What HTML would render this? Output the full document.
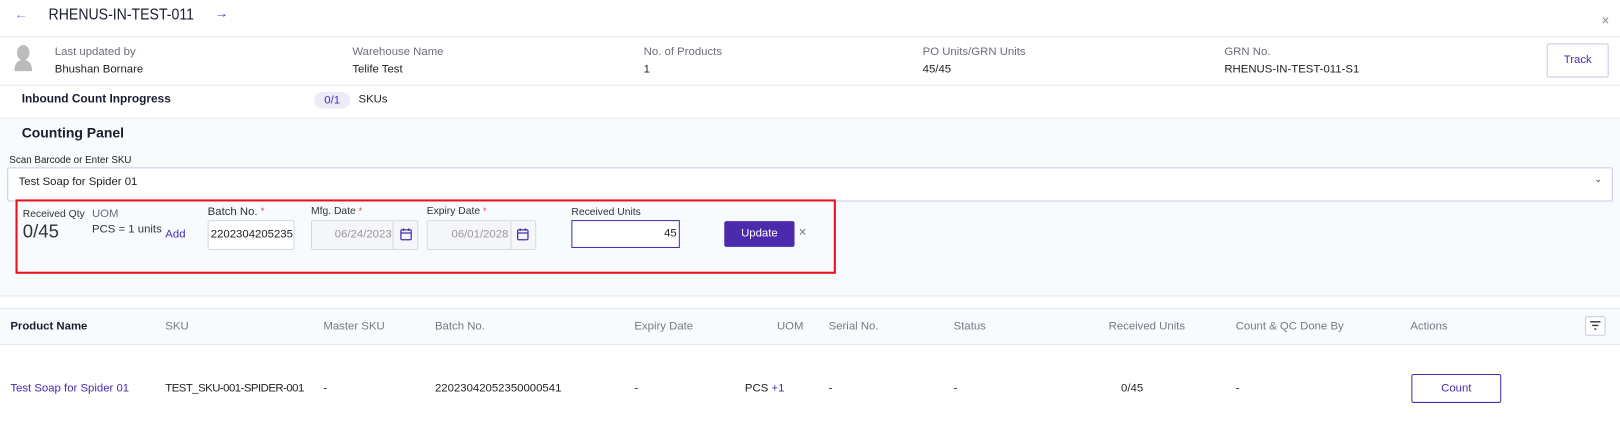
<!DOCTYPE html>
<html><head><style>
*{box-sizing:border-box;margin:0;padding:0}
body{width:1620px;height:428px;position:relative;background:#fff;font-family:"Liberation Sans",sans-serif;color:#222;font-size:11px;overflow:hidden}
#w{position:absolute;left:0;top:0;width:1568px;height:415px;transform:scale(1.0332);transform-origin:0 0}
.a{position:absolute;white-space:nowrap}
.lbl{color:#6b6f7a;font-size:11px}
.val{color:#222;font-size:11px}
.hl{position:absolute;left:0;width:1568px;height:1px;background:#e6e8ee}
.th{position:absolute;top:310px;color:#757a85;font-size:11px}
.td{position:absolute;top:370px;font-size:11px;color:#222}
.inp{position:absolute;background:#fff;border:1px solid #d6d9e0;border-radius:2px}
.star{color:#e04040;font-size:9px;vertical-align:top}
</style></head><body><div id="w">
<div class="a" style="left:14px;top:6px;color:#8a7fc8;font-size:13px">←</div>
<div class="a" style="left:47px;top:6px;font-size:15.5px;color:#1a1d2e;transform:scaleX(0.88);transform-origin:0 0">RHENUS-IN-TEST-011</div>
<div class="a" style="left:208px;top:5px;color:#4b2aad;font-size:13px">→</div>
<div class="a" style="left:1550px;top:12px;color:#888;font-size:13px">×</div>
<div class="hl" style="top:35px"></div>
<svg class="a" style="left:14px;top:43px" width="17" height="26" viewBox="0 0 17 26"><ellipse cx="8.5" cy="8" rx="6" ry="7.5" fill="#bbb"/><path d="M0 26 Q0 15 8.5 15 Q17 15 17 26Z" fill="#bbb"/></svg>
<div class="a lbl" style="left:53px;top:44px">Last updated by</div><div class="a val" style="left:53px;top:61px">Bhushan Bornare</div>
<div class="a lbl" style="left:341px;top:44px">Warehouse Name</div><div class="a val" style="left:341px;top:61px">Telife Test</div>
<div class="a lbl" style="left:623px;top:44px">No. of Products</div><div class="a val" style="left:623px;top:61px">1</div>
<div class="a lbl" style="left:893px;top:44px">PO Units/GRN Units</div><div class="a val" style="left:893px;top:61px">45/45</div>
<div class="a lbl" style="left:1185px;top:44px">GRN No.</div><div class="a val" style="left:1185px;top:61px">RHENUS-IN-TEST-011-S1</div>
<div class="a" style="left:1497px;top:42px;width:60px;height:33px;border:1px solid #c9c6e6;border-radius:2px;color:#4b2aad;text-align:center;line-height:31px;font-size:11px">Track</div>
<div class="hl" style="top:82px"></div>
<div class="a" style="left:21px;top:90px;font-weight:bold;font-size:11.5px;color:#1a1d2e">Inbound Count Inprogress</div>
<div class="a" style="left:304px;top:89px;width:35px;height:16px;border-radius:8px;background:#ecebf7;color:#4b2aad;text-align:center;line-height:16px;font-size:11px">0/1</div>
<div class="a" style="left:347px;top:90px;font-size:11px">SKUs</div>
<div class="a" style="left:0;top:114px;width:1568px;height:173px;background:#f7fbfd;border-top:1px solid #e2e5ec;border-bottom:1px solid #e2e5ec"></div>
<div class="a" style="left:21px;top:121px;font-size:13.5px;font-weight:bold;color:#1a1d2e">Counting Panel</div>
<div class="a" style="left:9px;top:150px;font-size:9.5px">Scan Barcode or Enter SKU</div>
<div class="a" style="left:7px;top:162px;width:1554px;height:33px;background:#fff;border:1px solid #c9cbe6;border-radius:2px"></div>
<div class="a" style="left:18px;top:170px;font-size:11px">Test Soap for Spider 01</div>
<div class="a" style="left:1543px;top:168px;font-size:9px;color:#444">⌄</div>
<div class="a" style="left:15px;top:193px;width:794px;height:72px;border:2px solid #e8121e"></div>
<div class="a" style="left:22px;top:202px;font-size:10px;color:#333">Received Qty</div>
<div class="a" style="left:22px;top:214px;font-size:18px;color:#333">0/45</div>
<div class="a" style="left:89px;top:201px;font-size:11px;color:#6b6f7a">UOM</div>
<div class="a" style="left:89px;top:216px;font-size:11px;color:#333">PCS = 1 units</div>
<div class="a" style="left:160px;top:221px;font-size:11px;color:#4b2aad">Add</div>
<div class="a" style="left:201px;top:199px;font-size:11px;color:#333">Batch No. <span class="star">*</span></div>
<div class="inp" style="left:201px;top:213px;width:84px;height:29px;font-size:11px;padding:7px 2px">2202304205235</div>
<div class="a" style="left:301px;top:199px;font-size:10px;color:#333">Mfg. Date <span class="star">*</span></div>
<div class="inp" style="left:301px;top:213px;width:104px;height:29px;background:#f4f6f9"></div>
<div class="a" style="left:324px;top:221px;font-size:11px;color:#999">06/24/2023</div>
<div class="a" style="left:380px;top:214px;width:1px;height:27px;background:#d6d9e0"></div>
<svg class="a" style="left:387px;top:220px" width="12" height="13" viewBox="0 0 12 13"><rect x="1" y="2.5" width="10" height="9.5" rx="1" fill="none" stroke="#4b2aad" stroke-width="1.2"/><path d="M1 5.5H11M3.5 1V3.5M8.5 1V3.5" stroke="#4b2aad" stroke-width="1.2"/></svg>
<div class="a" style="left:413px;top:199px;font-size:10px;color:#333">Expiry Date <span class="star">*</span></div>
<div class="inp" style="left:413px;top:213px;width:106px;height:29px;background:#f4f6f9"></div>
<div class="a" style="left:437px;top:221px;font-size:11px;color:#999">06/01/2028</div>
<div class="a" style="left:494px;top:214px;width:1px;height:27px;background:#d6d9e0"></div>
<svg class="a" style="left:500px;top:220px" width="12" height="13" viewBox="0 0 12 13"><rect x="1" y="2.5" width="10" height="9.5" rx="1" fill="none" stroke="#4b2aad" stroke-width="1.2"/><path d="M1 5.5H11M3.5 1V3.5M8.5 1V3.5" stroke="#4b2aad" stroke-width="1.2"/></svg>
<div class="a" style="left:553px;top:200px;font-size:10px;color:#333">Received Units</div>
<div class="a" style="left:553px;top:213px;width:105px;height:27px;background:#fff;border:1.5px solid #4b2aad;font-size:11px;text-align:right;padding:6px 2px">45</div>
<div class="a" style="left:701px;top:214px;width:68px;height:25px;background:#4b2aad;border-radius:2px;color:#fff;text-align:center;line-height:25px;font-size:11px">Update</div>
<div class="a" style="left:773px;top:217px;font-size:13px;color:#777">×</div>
<div class="a" style="left:0;top:298px;width:1568px;height:36px;background:#f7fbfd;border-top:1px solid #e2e5ec;border-bottom:1px solid #e2e5ec"></div>
<div class="th" style="left:10px;color:#1a1d2e;font-weight:bold">Product Name</div>
<div class="th" style="left:160px">SKU</div>
<div class="th" style="left:313px">Master SKU</div>
<div class="th" style="left:421px">Batch No.</div>
<div class="th" style="left:614px">Expiry Date</div>
<div class="th" style="left:752px">UOM</div>
<div class="th" style="left:802px">Serial No.</div>
<div class="th" style="left:923px">Status</div>
<div class="th" style="left:1073px">Received Units</div>
<div class="th" style="left:1196px">Count &amp; QC Done By</div>
<div class="th" style="left:1365px">Actions</div>
<div class="a" style="left:1534px;top:306px;width:20px;height:19px;border:1px solid #c9cbe6;border-radius:2px;background:#fff"></div>
<svg class="a" style="left:1538px;top:310px" width="12" height="10" viewBox="0 0 12 10"><path d="M1 1.5H11M3 5H9M5 8.5H7" stroke="#333" stroke-width="1.3"/></svg>
<div class="td" style="left:10px;color:#4b2aad">Test Soap for Spider 01</div>
<div class="td" style="left:160px;letter-spacing:-0.5px">TEST_SKU-001-SPIDER-001</div>
<div class="td" style="left:313px">-</div>
<div class="td" style="left:421px">22023042052350000541</div>
<div class="td" style="left:614px">-</div>
<div class="td" style="left:721px">PCS <span style="color:#4b2aad">+1</span></div>
<div class="td" style="left:802px">-</div>
<div class="td" style="left:923px">-</div>
<div class="td" style="left:1085px">0/45</div>
<div class="td" style="left:1196px">-</div>
<div class="a" style="left:1366px;top:362px;width:87px;height:28px;border:1px solid #4b2aad;border-radius:2px;color:#4b2aad;text-align:center;line-height:26px;font-size:11px">Count</div>
</div></body></html>
